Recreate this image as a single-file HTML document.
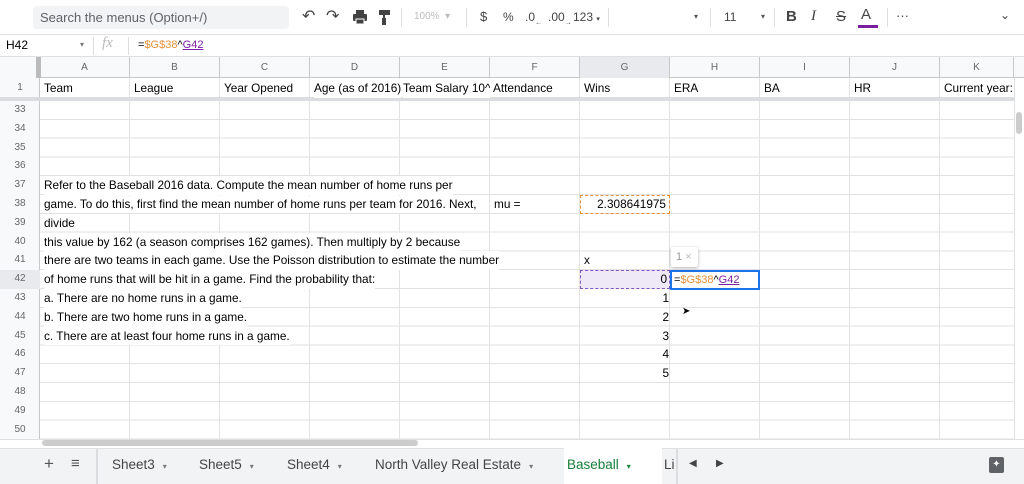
<!DOCTYPE html>
<html><head><style>
*{margin:0;padding:0;box-sizing:border-box}
body{width:1024px;height:484px;overflow:hidden;background:#fff;font-family:"Liberation Sans",Arial,sans-serif;position:relative;color:#000}
.a{position:absolute;white-space:nowrap}
.t{font-size:11.8px;line-height:18.8px;height:18.8px}
.rh{position:absolute;left:0;width:40px;font-size:10px;color:#666;text-align:center;line-height:18.8px;height:18.8px}
.ch{position:absolute;top:57px;height:21px;width:90px;font-size:10px;color:#666;text-align:center;line-height:21px;border-right:1px solid #c8c8c8}
.tab{position:absolute;top:448px;height:36px;line-height:34px;font-size:13.5px;color:#444}
.tab i{font-style:normal;font-size:8px;color:#777;margin-left:8px}
.ic{position:absolute;top:9px;font-size:14px;color:#444}
</style></head><body>
<!-- toolbar -->
<div class="a" style="left:0;top:0;width:1024px;height:35px;background:#fff;border-bottom:1px solid #e0e0e0"></div>
<div class="a" style="left:33px;top:6px;width:256px;height:23px;background:#f1f3f4;border-radius:4px;font-size:13px;color:#5f6368;line-height:23px;padding-left:7px">Search the menus (Option+/)</div>
<div class="ic" style="left:302px;font-size:16px;top:6px">↶</div>
<div class="ic" style="left:326px;font-size:16px;top:6px">↷</div>
<svg class="a" style="left:352px;top:10px" width="16" height="15"><rect x="4" y="0" width="8" height="4" fill="#444"/><rect x="1" y="4" width="14" height="7" rx="1" fill="#444"/><rect x="4" y="9" width="8" height="5" fill="#444" stroke="#fff"/></svg>
<svg class="a" style="left:378px;top:10px" width="14" height="15"><rect x="1" y="0" width="11" height="5" fill="#444"/><rect x="5" y="5" width="2" height="4" fill="#444"/><rect x="4" y="8" width="4" height="7" fill="#444"/></svg>
<div class="a" style="left:401px;top:8px;width:1px;height:19px;background:#ddd"></div>
<div class="a" style="left:414px;top:11px;font-size:10px;color:#bbb">100% &nbsp;▾</div>
<div class="a" style="left:466px;top:8px;width:1px;height:19px;background:#ddd"></div>
<div class="a" style="left:480px;top:9px;font-size:13px;color:#444">$</div>
<div class="a" style="left:503px;top:10px;font-size:12px;color:#444">%</div>
<div class="a" style="left:525px;top:10px;font-size:12px;color:#444">.0<sub style="font-size:7px">←</sub></div>
<div class="a" style="left:548px;top:10px;font-size:12px;color:#444">.00<sub style="font-size:7px">→</sub></div>
<div class="a" style="left:573px;top:10px;font-size:12px;color:#444">123 <span style="font-size:7px">▾</span></div>
<div class="a" style="left:608px;top:8px;width:1px;height:19px;background:#ddd"></div>
<div class="a" style="left:694px;top:12px;font-size:8px;color:#555">▾</div>
<div class="a" style="left:710px;top:8px;width:1px;height:19px;background:#ddd"></div>
<div class="a" style="left:724px;top:10px;font-size:12px;color:#444">11</div>
<div class="a" style="left:761px;top:12px;font-size:8px;color:#555">▾</div>
<div class="a" style="left:774px;top:8px;width:1px;height:19px;background:#ddd"></div>
<div class="a" style="left:786px;top:8px;font-size:15px;font-weight:bold;color:#444">B</div>
<div class="a" style="left:811px;top:8px;font-size:15px;font-style:italic;color:#444;font-family:'Liberation Serif',serif">I</div>
<div class="a" style="left:836px;top:8px;font-size:15px;color:#444;text-decoration:line-through">S</div>
<div class="a" style="left:861px;top:6px;font-size:15px;color:#444">A</div>
<div class="a" style="left:858px;top:25px;width:20px;height:3px;background:#7b1fa2"></div>
<div class="a" style="left:887px;top:8px;width:1px;height:19px;background:#ddd"></div>
<div class="a" style="left:896px;top:8px;font-size:13px;color:#444">···</div>
<div class="a" style="left:1000px;top:8px;font-size:12px;color:#444">⌄</div>
<!-- formula bar -->
<div class="a" style="left:0;top:35px;width:1024px;height:22px;border-bottom:1px solid #e0e0e0"></div>
<div class="a" style="left:6px;top:38px;font-size:12px">H42</div>
<div class="a" style="left:80px;top:40px;font-size:8px;color:#777">▾</div>
<div class="a" style="left:93px;top:37px;width:1px;height:18px;background:#ddd"></div>
<div class="a" style="left:102px;top:35px;font-size:15px;color:#bbb;font-style:italic;font-family:'Liberation Serif',serif">fx</div>
<div class="a" style="left:128px;top:37px;width:1px;height:18px;background:#ddd"></div>
<div class="a" style="left:138px;top:39px;font-size:11px">=<span style="color:#e69138">$G$38</span>^<span style="color:#7b1fa2;text-decoration:underline">G42</span></div>
<!-- column headers -->
<div class="a" style="left:0;top:57px;width:1024px;height:21px;background:#f8f9fa;border-bottom:1px solid #c8c8c8"></div>
<div class="a" style="left:0;top:57px;width:40px;height:44px;background:#f8f9fa;border-right:1px solid #c8c8c8"></div>
<div class="a" style="left:36px;top:57px;width:5px;height:21px;background:#bbb"></div>
<div class="ch" style="left:40px">A</div><div class="ch" style="left:130px">B</div><div class="ch" style="left:220px">C</div><div class="ch" style="left:310px">D</div><div class="ch" style="left:400px">E</div><div class="ch" style="left:490px">F</div><div class="ch" style="left:580px;background:#e8eaed">G</div><div class="ch" style="left:670px">H</div><div class="ch" style="left:760px">I</div><div class="ch" style="left:850px">J</div><div class="ch" style="left:940px;width:74px">K</div>
<!-- row 1 -->
<div class="a" style="left:40px;top:78px;width:974px;height:20px;background:repeating-linear-gradient(90deg,transparent 0 89px,#e2e2e2 89px 90px)"></div>
<div class="rh" style="top:78px;height:20px;line-height:20px">1</div>
<div class="a" style="left:0;top:97px;width:1014px;height:4px;background:#dadce0"></div>
<div class="a t" style="left:44px;top:79px">Team</div>
<div class="a t" style="left:134px;top:79px">League</div>
<div class="a t" style="left:224px;top:79px">Year Opened</div>
<div class="a t" style="left:314px;top:79px;background:#fff">Age (as of 2016)</div>
<div class="a t" style="left:403px;top:79px;background:#fff;width:87px;overflow:hidden">Team Salary 10^</div>
<div class="a t" style="left:493px;top:79px">Attendance</div>
<div class="a t" style="left:584px;top:79px">Wins</div>
<div class="a t" style="left:674px;top:79px">ERA</div>
<div class="a t" style="left:764px;top:79px">BA</div>
<div class="a t" style="left:854px;top:79px">HR</div>
<div class="a t" style="left:944px;top:79px">Current year:</div>
<!-- grid -->
<div class="a" style="left:0;top:101px;width:40px;height:338px;background:#f8f9fa;border-right:1px solid #c8c8c8"></div>
<div class="a" style="left:40px;top:101px;width:974px;height:338px;background:repeating-linear-gradient(180deg,transparent 0 17.8px,#e2e2e2 17.8px 18.8px),repeating-linear-gradient(90deg,transparent 0 89px,#e2e2e2 89px 90px)"></div>
<div class="a" style="left:0;top:270.2px;width:40px;height:18.8px;background:#e8eaed"></div>
<div class="rh" style="top:101px">33</div><div class="rh" style="top:119.8px">34</div><div class="rh" style="top:138.6px">35</div><div class="rh" style="top:157.4px">36</div><div class="rh" style="top:176.2px">37</div><div class="rh" style="top:195px">38</div><div class="rh" style="top:213.8px">39</div><div class="rh" style="top:232.6px">40</div><div class="rh" style="top:251.4px">41</div><div class="rh" style="top:270.2px">42</div><div class="rh" style="top:289px">43</div><div class="rh" style="top:307.8px">44</div><div class="rh" style="top:326.6px">45</div><div class="rh" style="top:345.4px">46</div><div class="rh" style="top:364.2px">47</div><div class="rh" style="top:383px">48</div><div class="rh" style="top:401.8px">49</div><div class="rh" style="top:420.6px">50</div>
<div class="a t" style="left:44px;top:176.2px;background:#fff">Refer to the Baseball 2016 data. Compute the mean number of home runs per</div>
<div class="a t" style="left:44px;top:195.5px;height:17.5px;background:#fff;width:445px;overflow:hidden;line-height:17px">game. To do this, first find the mean number of home runs per team for 2016. Next,</div>
<div class="a t" style="left:494px;top:195px">mu =</div>
<div class="a t" style="left:44px;top:213.8px">divide</div>
<div class="a t" style="left:44px;top:232.6px;background:#fff">this value by 162 (a season comprises 162 games). Then multiply by 2 because</div>
<div class="a t" style="left:44px;top:251.4px;background:#fff">there are two teams in each game. Use the Poisson distribution to estimate the number</div>
<div class="a t" style="left:44px;top:270.2px;background:#fff">of home runs that will be hit in a game. Find the probability that:</div>
<div class="a t" style="left:44px;top:289px;background:#fff">a. There are no home runs in a game.</div>
<div class="a t" style="left:44px;top:307.8px;background:#fff">b. There are two home runs in a game.</div>
<div class="a t" style="left:44px;top:326.6px;background:#fff">c. There are at least four home runs in a game.</div>
<div class="a t" style="left:580px;top:195px;width:90px;height:19px;border:1.5px dashed #e69138;text-align:right;padding-right:3px;line-height:16px">2.308641975</div>
<div class="a t" style="left:584px;top:251.4px">x</div>
<div class="a t" style="left:580px;top:270px;width:90px;height:19px;border:1.5px dashed #7e57c2;background:#efe9f7;text-align:right;padding-right:2px;line-height:16px">0</div>
<div class="a t" style="left:580px;top:289px;width:89px;text-align:right">1</div>
<div class="a t" style="left:580px;top:307.8px;width:89px;text-align:right">2</div>
<div class="a t" style="left:580px;top:326.6px;width:89px;text-align:right">3</div>
<div class="a t" style="left:580px;top:345.4px;width:89px;text-align:right">4</div>
<div class="a t" style="left:580px;top:364.2px;width:89px;text-align:right">5</div>
<div class="a" style="left:670px;top:269.5px;width:90px;height:20px;border:2px solid #1a73e8;background:#fff;font-size:11px;line-height:16px;padding-left:2px">=<span style="color:#e69138">$G$38</span>^<span style="color:#7b1fa2;text-decoration:underline">G42</span></div>
<div class="a" style="left:671px;top:247px;width:27px;height:20px;background:#fff;box-shadow:0 1px 3px rgba(0,0,0,.3);border-radius:2px;font-size:11px;color:#999;line-height:20px;padding-left:5px">1 <span style="color:#bbb">×</span></div>
<div class="a" style="left:682px;top:306px;font-size:10px">➤</div>
<!-- vertical scrollbar -->
<div class="a" style="left:1014px;top:78px;width:10px;height:370px;background:#fff;border-left:1px solid #e0e0e0"></div>
<div class="a" style="left:1016px;top:112px;width:6px;height:22px;background:#ccc;border-radius:3px"></div>
<!-- horizontal scrollbar -->
<div class="a" style="left:0;top:439px;width:1024px;height:9px;background:#fff;border-top:1px solid #e0e0e0"></div>
<div class="a" style="left:42px;top:440px;width:376px;height:6px;background:#ccc;border-radius:3px"></div>
<!-- tabs -->
<div class="a" style="left:0;top:448px;width:1024px;height:36px;background:#f1f3f4;border-top:1px solid #e0e0e0"></div>
<div class="a" style="left:44px;top:454px;font-size:17px;color:#555">+</div>
<div class="a" style="left:71px;top:455px;font-size:15px;color:#555">≡</div>
<div class="a" style="left:96px;top:449px;width:2px;height:35px;background:#dadce0"></div>
<div class="tab" style="left:112px">Sheet3<i>▾</i></div>
<div class="tab" style="left:199px">Sheet5<i>▾</i></div>
<div class="tab" style="left:287px">Sheet4<i>▾</i></div>
<div class="tab" style="left:375px">North Valley Real Estate<i>▾</i></div>
<div class="a" style="left:564px;top:448px;width:98px;height:36px;background:#fff"></div>
<div class="tab" style="left:567px;color:#188038">Baseball<i style="color:#188038">▾</i></div>
<div class="tab" style="left:664px">Li</div>
<div class="a" style="left:676px;top:449px;width:2px;height:35px;background:#dadce0"></div>
<div class="a" style="left:689px;top:458px;font-size:10px;color:#444">◀</div>
<div class="a" style="left:716px;top:458px;font-size:10px;color:#444">▶</div>
<div class="a" style="left:989px;top:457px;width:15px;height:16px;background:#5f6368;border-radius:2px;color:#fff;font-size:10px;text-align:center;line-height:16px">✦</div>
</body></html>
